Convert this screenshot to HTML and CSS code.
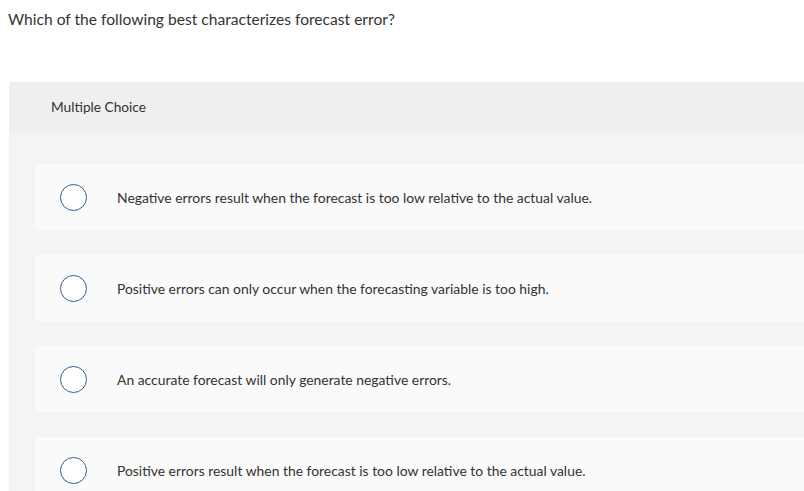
FILE: index.html
```html
<!DOCTYPE html>
<html>
<head>
<meta charset="utf-8">
<link rel="stylesheet" href="styles.css">
</head>
<body>
<p class="question">Which of the following best characterizes forecast error?</p>
<div class="panel">
  <div class="panel-head">Multiple Choice</div>
  <div class="panel-body">
    <div class="option"><span class="radio"></span><span class="label">Negative errors result when the forecast is too low relative to the actual value.</span></div>
    <div class="option"><span class="radio"></span><span class="label">Positive errors can only occur when the forecasting variable is too high.</span></div>
    <div class="option"><span class="radio"></span><span class="label">An accurate forecast will only generate negative errors.</span></div>
    <div class="option"><span class="radio"></span><span class="label">Positive errors result when the forecast is too low relative to the actual value.</span></div>
  </div>
</div>
</body>
</html>
```
FILE: styles.css
```css
html, body { margin: 0; padding: 0; background: #fff; }
body { width: 804px; height: 491px; overflow: hidden; font-family: "Lato", "Open Sans", sans-serif; color: #333; }
.question { margin: 0; padding: 10px 0 0 8px; font-size: 15.6px; line-height: 18px; color: #333; }
.panel { margin: 54px 0 0 9px; width: 830px; border-radius: 3px 0 0 0; overflow: hidden; }
.panel-head { height: 50px; background: #efefef; padding-left: 42px; font-size: 13.7px; line-height: 50px; color: #333; }
.panel-body { background: #f4f4f4; padding: 32px 0 8px 26px; display: flex; flex-direction: column; gap: 25px; }
.option { height: 66px; background: #fafafa; border-radius: 3px 0 0 3px; display: flex; align-items: center; padding-left: 25px; gap: 30px; }
.radio { width: 25px; height: 25px; border: 1.5px solid #2f5f8f; border-radius: 50%; background: #fff; flex: none; }
.label { font-size: 13.9px; color: #333; }
```
